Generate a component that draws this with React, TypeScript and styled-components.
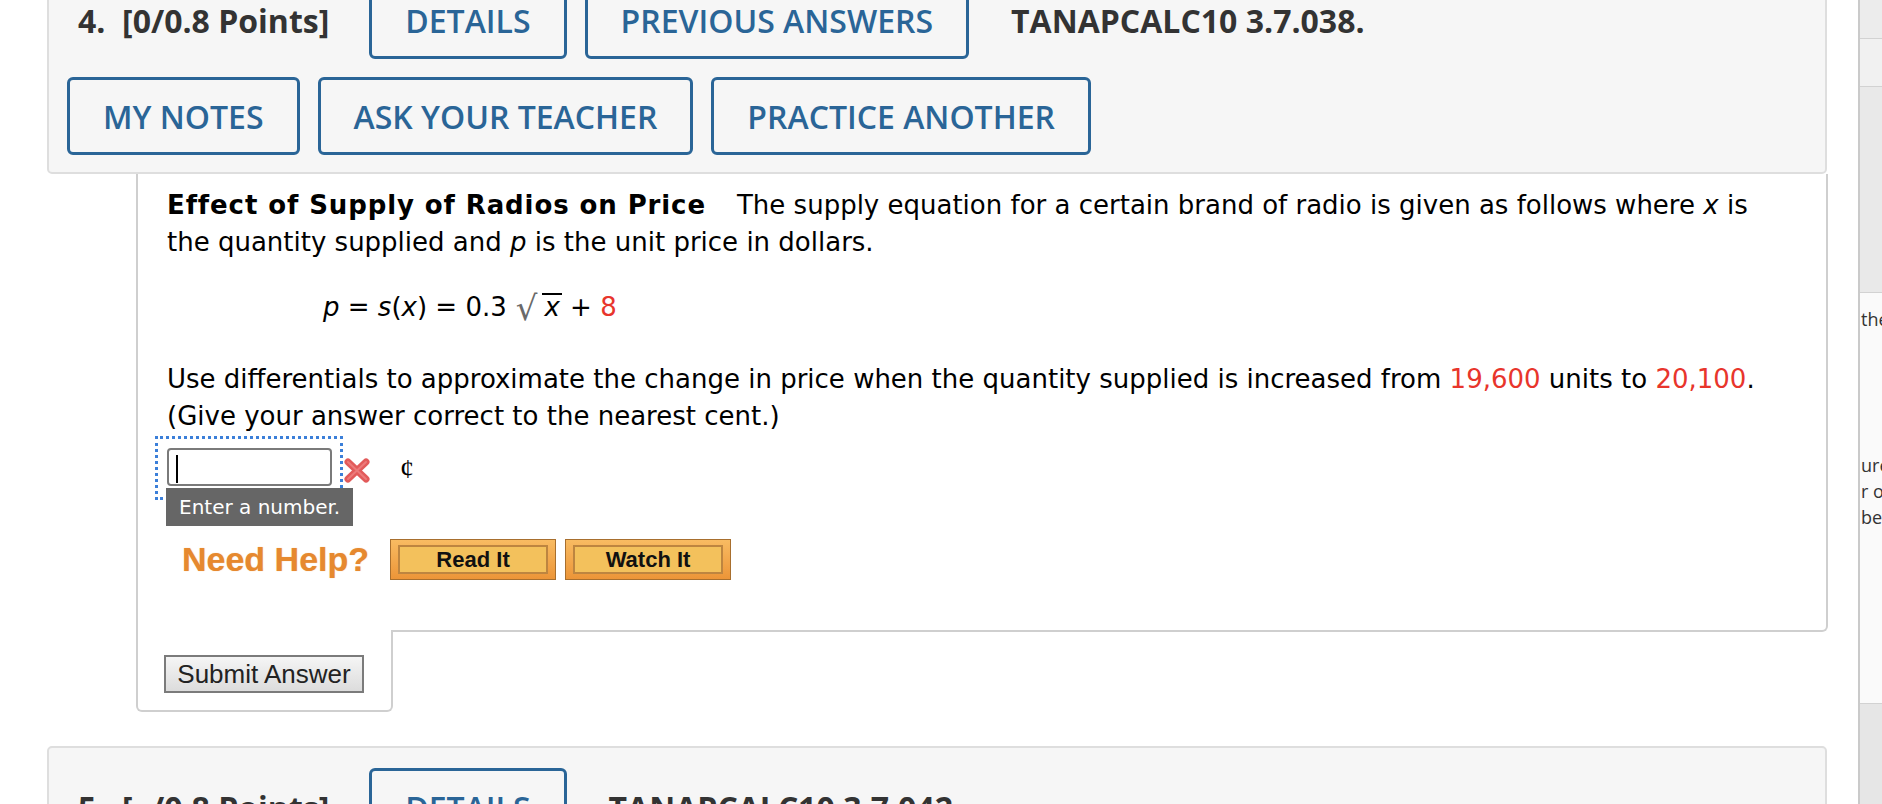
import { FC } from 'react';
import styled, { createGlobalStyle } from 'styled-components';

const BLUE = '#2a6597';
const RED = '#e8352c';

const GlobalStyle = createGlobalStyle`
  html, body {
    margin: 0;
    padding: 0;
    background: #fff;
  }
  body {
    font-family: 'DejaVu Sans', Verdana, sans-serif;
    color: #000;
  }
`;

const Page = styled.div`
  display: flex;
  width: 1882px;
  height: 804px;
  overflow: hidden;
`;

const Main = styled.main`
  flex: 1;
  display: flex;
  flex-direction: column;
  padding: 0 31px 0 47px;
`;

const Panel = styled.section<{ $first?: boolean }>`
  display: flex;
  flex-direction: column;
  gap: 18px;
  margin-top: ${(p) => (p.$first ? '-41px' : '34px')};
  padding: 20px 0 17px 18px;
  background: #f6f6f6;
  border: 2px solid #dedede;
  border-radius: 5px;
`;

const Row = styled.div`
  display: flex;
  align-items: center;
  gap: 18px;
`;

const QNumber = styled.span`
  padding: 0 22px 0 11px;
  font-family: 'Open Sans', sans-serif;
  font-weight: 700;
  font-size: 32px;
  color: #333;
  white-space: pre;
`;

const Blank = styled.span`
  visibility: hidden;
`;

const QCode = styled.span`
  margin-left: 24px;
  font-family: 'Open Sans', sans-serif;
  font-weight: 700;
  font-size: 32px;
  color: #333;
`;

const TabButton = styled.button`
  box-sizing: border-box;
  height: 78px;
  padding: 0 33px;
  background: transparent;
  border: 3px solid ${BLUE};
  border-radius: 6px;
  font-family: 'Open Sans', sans-serif;
  font-weight: 600;
  font-size: 32px;
  color: ${BLUE};
  white-space: nowrap;
`;

const QuestionBox = styled.div`
  margin: 0 -1px 0 89px;
  padding: 13px 40px 50px 29px;
  background: #fff;
  border: 2px solid #cfcfcf;
  border-top: none;
  border-radius: 0 0 6px 0;
  font-size: 26px;
  line-height: 37px;
`;

const Para = styled.p`
  margin: 0;
`;

const Title = styled.b`
  margin-right: 31px;
  letter-spacing: 0.9px;
`;

const Var = styled.i``;

const Given = styled.span`
  color: ${RED};
`;

const Equation = styled.div`
  margin: 28px 0 35px 156px;
  white-space: pre;
`;

const Radical = styled.span`
  display: inline-block;
  margin: 0 5px 0 9px;
  color: #6a6a6a;
  font-size: 34px;
  line-height: 24px;
  transform: translateY(4px);
`;

const Overlined = styled.i`
  display: inline-block;
  padding: 0 2px;
  border-top: 2px solid #000;
  line-height: 24px;
`;

const AnswerRow = styled.div`
  display: flex;
  align-items: center;
  margin: 1px 0 0 -12px;
`;

const AnswerField = styled.div`
  position: relative;
  padding: 9px 8px 11px 9px;
  border: 3px dotted #3b7fd9;
`;

const InputBox = styled.div`
  box-sizing: border-box;
  width: 165px;
  height: 38px;
  padding: 5px 7px;
  background: #fff;
  border: 2px solid #7a7a7a;
  border-radius: 4px;
`;

const Caret = styled.div`
  width: 2px;
  height: 28px;
  background: #000;
`;

const Tooltip = styled.div`
  position: absolute;
  left: 8px;
  top: 49px;
  height: 38px;
  padding: 0 13px;
  background: #666;
  color: #fff;
  font-size: 20px;
  line-height: 38px;
  white-space: nowrap;
`;

const WrongMark = styled.svg`
  width: 28px;
  height: 27px;
  margin-top: 4px;
`;

const Unit = styled.span`
  margin-left: 29px;
  font-family: 'Liberation Serif', serif;
  font-size: 28px;
`;

const HelpRow = styled.div`
  display: flex;
  align-items: center;
  margin: 39px 0 0 15px;
`;

const NeedHelp = styled.span`
  margin-right: 21px;
  font-family: 'Liberation Sans', Arial, sans-serif;
  font-weight: 700;
  font-size: 34px;
  line-height: 41px;
  color: #e6892f;
  text-shadow: 0 0 1px rgba(230, 137, 47, 0.6);
`;

const HelpButton = styled.button`
  box-sizing: border-box;
  width: 166px;
  height: 41px;
  margin-right: 9px;
  padding: 5px 7px;
  background: linear-gradient(#f8bb62, #ec9538);
  border: 1px solid #a86f2e;
`;

const HelpLabel = styled.span`
  display: block;
  box-sizing: border-box;
  height: 29px;
  background: #f3c15c;
  border: 2px solid #bd8540;
  font-family: 'Liberation Sans', Arial, sans-serif;
  font-weight: 700;
  font-size: 22px;
  line-height: 25px;
  color: #111;
`;

const SubmitTab = styled.div`
  align-self: flex-start;
  box-sizing: border-box;
  width: 257px;
  margin: -2px 0 0 89px;
  padding: 25px 0 17px 26px;
  background: #fff;
  border: 2px solid #cfcfcf;
  border-top: none;
  border-radius: 0 0 6px 6px;
`;

const SubmitButton = styled.button`
  box-sizing: border-box;
  width: 200px;
  height: 38px;
  padding: 0;
  background: linear-gradient(#f5f5f5, #dcdcdc);
  border: 2px solid #7b7b7b;
  font-family: 'Liberation Sans', Arial, sans-serif;
  font-size: 26px;
  color: #222;
`;

const Aside = styled.aside`
  width: 22px;
  display: flex;
  flex-direction: column;
  border-left: 2px solid #cacaca;
  background: #e9e9e9;
  overflow: hidden;
  font-family: 'Open Sans', sans-serif;
  font-size: 18px;
  color: #333;
`;

const AsideBlock = styled.div<{ $h: number; $bg: string }>`
  height: ${(p) => p.$h}px;
  flex: none;
  background: ${(p) => p.$bg};
  border-bottom: 1px solid #d2d2d2;
  padding-left: 1px;
  white-space: nowrap;
`;

const AsideLine = styled.div<{ $mt: number }>`
  margin-top: ${(p) => p.$mt}px;
  line-height: 25px;
`;

const QuestionHeader: FC<{
  num: string;
  score?: string;
  code: string;
  previous?: boolean;
  first?: boolean;
}> = ({ num, score, code, previous, first }) => (
  <Panel $first={first}>
    <Row>
      <QNumber>
        {num}
        {'  ['}
        {score ?? <Blank>0</Blank>}
        {'/0.8 Points]'}
      </QNumber>
      <TabButton>DETAILS</TabButton>
      {previous && <TabButton>PREVIOUS ANSWERS</TabButton>}
      <QCode>{code}</QCode>
    </Row>
    {first && (
      <Row>
        <TabButton>MY NOTES</TabButton>
        <TabButton>ASK YOUR TEACHER</TabButton>
        <TabButton>PRACTICE ANOTHER</TabButton>
      </Row>
    )}
  </Panel>
);

const App: FC = () => (
  <Page>
    <GlobalStyle />
    <Main>
      <QuestionHeader num="4." score="0" code="TANAPCALC10 3.7.038." previous first />
      <QuestionBox>
        <Para>
          <Title>Effect of Supply of Radios on Price</Title>The supply equation for a certain brand of
          radio is given as follows where <Var>x</Var> is the quantity supplied and <Var>p</Var> is
          the unit price in dollars.
        </Para>
        <Equation>
          <Var>p</Var> = <Var>s</Var>(<Var>x</Var>) = 0.3<Radical>√</Radical><Overlined>x</Overlined>{' '}
          + <Given>8</Given>
        </Equation>
        <Para>
          Use differentials to approximate the change in price when the quantity supplied is
          increased from <Given>19,600</Given> units to <Given>20,100</Given>.
          <br />
          (Give your answer correct to the nearest cent.)
        </Para>
        <AnswerRow>
          <AnswerField>
            <InputBox>
              <Caret />
            </InputBox>
            <Tooltip>Enter a number.</Tooltip>
          </AnswerField>
          <WrongMark viewBox="0 0 28 27">
            <path
              d="M5 5 L23 22 M23 5 L5 22"
              stroke="#e25a5a"
              strokeWidth="7"
              strokeLinecap="round"
              fill="none"
            />
            <path
              d="M5 5 L23 22 M23 5 L5 22"
              stroke="#f39090"
              strokeWidth="2"
              strokeLinecap="round"
              fill="none"
              opacity="0.6"
            />
          </WrongMark>
          <Unit>¢</Unit>
        </AnswerRow>
        <HelpRow>
          <NeedHelp>Need Help?</NeedHelp>
          <HelpButton>
            <HelpLabel>Read It</HelpLabel>
          </HelpButton>
          <HelpButton>
            <HelpLabel>Watch It</HelpLabel>
          </HelpButton>
        </HelpRow>
      </QuestionBox>
      <SubmitTab>
        <SubmitButton>Submit Answer</SubmitButton>
      </SubmitTab>
      <QuestionHeader num="5." code="TANAPCALC10 3.7.042." />
    </Main>
    <Aside>
      <AsideBlock $h={38} $bg="#ececec" />
      <AsideBlock $h={47} $bg="#f1f1f1" />
      <AsideBlock $h={205} $bg="#e9e9e9" />
      <AsideBlock $h={410} $bg="#fafafa">
        <AsideLine $mt={14}>the</AsideLine>
        <AsideLine $mt={121}>ures</AsideLine>
        <AsideLine $mt={1}>r of</AsideLine>
        <AsideLine $mt={1}>be</AsideLine>
      </AsideBlock>
      <AsideBlock $h={104} $bg="#e6e6e6" />
    </Aside>
  </Page>
);

export default App;
